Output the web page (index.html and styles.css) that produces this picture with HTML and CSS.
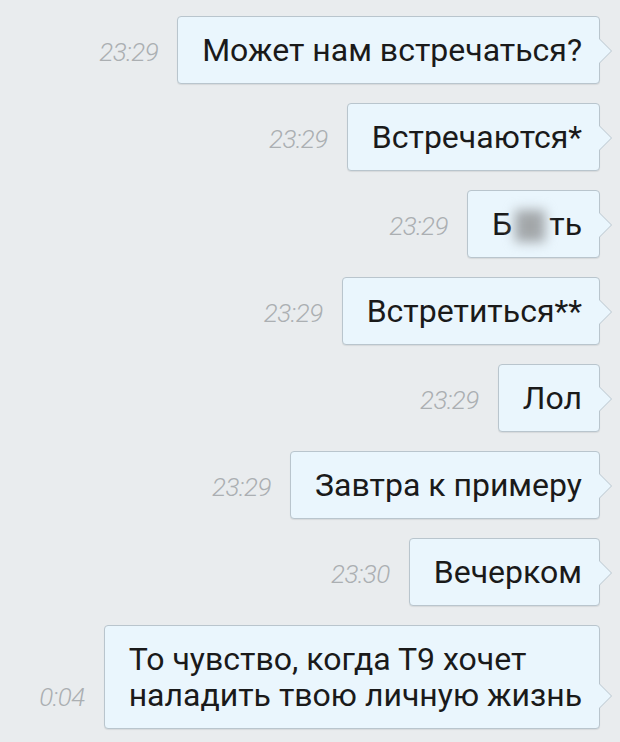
FILE: index.html
```html
<!doctype html>
<html lang="ru">
<head>
    <meta charset="UTF-8">
    <title>Переписка</title>
    <link rel="stylesheet" href="styles.css">
</head>
<body>
<div class="chat">
    <div class="msg">
        <span class="time">23:29</span>
        <div class="bubble">Может нам встречаться?</div>
    </div>
    <div class="msg">
        <span class="time">23:29</span>
        <div class="bubble">Встречаются*</div>
    </div>
    <div class="msg">
        <span class="time">23:29</span>
        <div class="bubble">Б<span class="blur"></span>ть</div>
    </div>
    <div class="msg">
        <span class="time">23:29</span>
        <div class="bubble">Встретиться**</div>
    </div>
    <div class="msg">
        <span class="time">23:29</span>
        <div class="bubble">Лол</div>
    </div>
    <div class="msg">
        <span class="time">23:29</span>
        <div class="bubble">Завтра к примеру</div>
    </div>
    <div class="msg">
        <span class="time">23:30</span>
        <div class="bubble">Вечерком</div>
    </div>
    <div class="msg">
        <span class="time">0:04</span>
        <div class="bubble">То чувство, когда Т9 хочет<br>наладить твою личную жизнь</div>
    </div>
</div>
</body>
</html>
```

FILE: styles.css
```css
html, body {
    margin: 0;
    height: 100%;
}

body {
    background: #e9ecee;
    font-family: Roboto, "Noto Sans", sans-serif;
}

.chat {
    display: flex;
    flex-direction: column;
    align-items: flex-end;
    gap: 19px;
    padding: 16px 20px 0 0;
}

.msg {
    display: flex;
    align-items: last baseline;
    gap: 19px;
}

.time {
    font-size: 26px;
    font-style: italic;
    font-weight: 300;
    color: #abafb2;
    letter-spacing: -0.5px;
}

.bubble {
    position: relative;
    box-sizing: border-box;
    padding: 15px 17px 15px 24px;
    background: #eaf6fd;
    border: 1px solid #b9c5cd;
    border-radius: 4px;
    box-shadow: 0 1px 1px rgba(0, 0, 0, 0.08);
    font-size: 32px;
    line-height: 36px;
    color: #1a1a1a;
}

.bubble::before,
.bubble::after {
    content: "";
    position: absolute;
    bottom: 19px;
    width: 0;
    height: 0;
    border-style: solid;
    border-color: transparent;
}

.bubble::before {
    right: -13px;
    border-width: 13px 0 13px 13px;
    border-left-color: #b9c5cd;
}

.bubble::after {
    right: -12px;
    bottom: 20px;
    border-width: 12px 0 12px 12px;
    border-left-color: #eaf6fd;
}

.blur {
    display: inline-block;
    background: #a2a6a9;
    filter: blur(6px);
    width: 30px;
    height: 32px;
    margin: 0 4px 0 3px;
    vertical-align: -7px;
}
```
